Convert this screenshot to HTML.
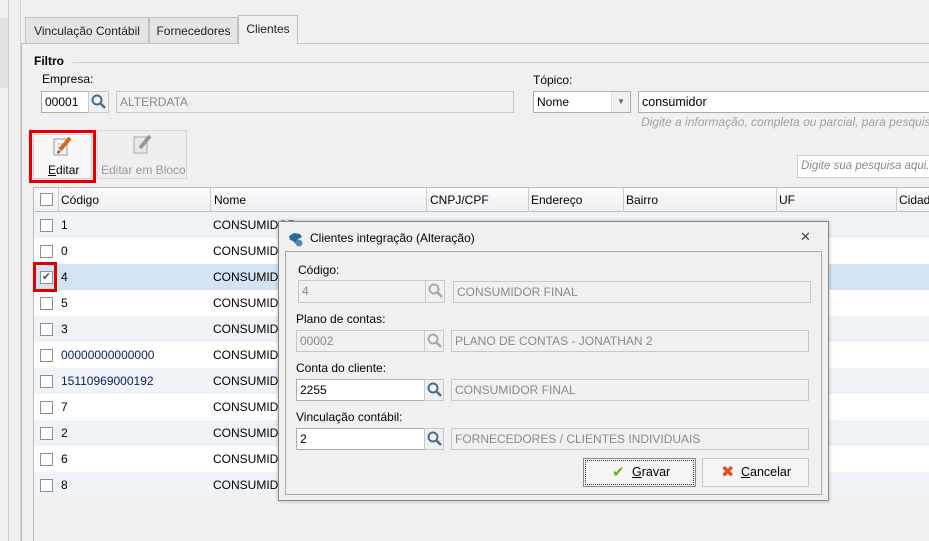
<!DOCTYPE html>
<html><head><meta charset="utf-8"><style>
*{box-sizing:border-box;margin:0;padding:0}
body{width:929px;height:541px;overflow:hidden;background:#f0f0f0;font-family:"Liberation Sans","DejaVu Sans",sans-serif;font-size:12px;color:#000;position:relative}
.a{position:absolute}
.inp{position:absolute;background:#fff;border:1px solid #abadb3;padding:2px 3px;line-height:16px;white-space:nowrap;overflow:hidden}
.dis{background:#f0f0f0;color:#8a8a8a;border-color:#c8c8c8}
.btn{position:absolute;border:1px solid #c8c8c8;background:#e9e9e9;}
.tab{position:absolute;top:17px;height:26px;border:1px solid #c0c0c0;border-bottom:none;background:#e4e4e4;padding:6px 0;text-align:center;font-size:12px;color:#222;white-space:nowrap}
.row{position:absolute;left:34px;width:895px;height:26px;line-height:26px}
.cb{position:absolute;left:6px;top:7px;width:13px;height:13px;border:1px solid #8e8f8f;background:#fff}
.c{position:absolute;white-space:nowrap}
.lbl{position:absolute;font-size:12px}
</style></head><body>
<div class="a" style="left:8px;top:0;width:1px;height:541px;background:#d0d0d0"></div>
<div class="a" style="left:20px;top:0;width:1px;height:541px;background:#d0d0d0"></div>
<div class="a" style="left:0;top:18px;width:8px;height:70px;background:#e0e0e0"></div>
<!-- tabs -->
<div class="tab" style="left:25px;width:124px">Vinculação Contábil</div>
<div class="tab" style="left:149px;width:89px">Fornecedores</div>
<div class="tab" style="left:238px;top:15px;height:29px;width:60px;background:#f0f0f0;z-index:2">Clientes</div>
<div class="a" style="left:21px;top:43px;width:908px;height:498px;border:1px solid #c0c0c0;border-right:none;border-bottom:none"></div>
<div class="a" style="left:34px;top:54px;font-weight:bold;font-size:12px">Filtro</div>
<div class="a" style="left:73px;top:62px;width:856px;height:1px;background:#d0d0d0"></div>
<div class="lbl" style="left:42px;top:72px">Empresa:</div>
<div class="inp" style="left:41px;top:91px;width:48px;height:22px">00001</div>
<div class="btn" style="left:88px;top:91px;width:21px;height:22px;background:#f0f0f0"><svg width="19" height="20"><circle cx="8" cy="8" r="4.5" fill="none" stroke="#4a6b8a" stroke-width="2"/><line x1="11" y1="11" x2="16" y2="16" stroke="#4a6b8a" stroke-width="2.5"/></svg></div>
<div class="inp dis" style="left:116px;top:91px;width:398px;height:22px">ALTERDATA</div>
<div class="lbl" style="left:533px;top:73px">Tópico:</div>
<div class="inp" style="left:533px;top:91px;width:98px;height:22px">Nome</div>
<div class="a" style="left:611px;top:92px;width:19px;height:20px;border-left:1px solid #ddd;background:#f0f0f0;font-size:8px;color:#666;text-align:center;line-height:20px">▼</div>
<div class="inp" style="left:638px;top:91px;width:295px;height:22px;font-size:12.5px">consumidor</div>
<div class="a" style="left:641px;top:115px;font-style:italic;color:#a0a0a0;font-size:12px;white-space:nowrap">Digite a informação, completa ou parcial, para pesquisa</div>
<!-- buttons -->
<div class="a" style="left:29px;top:130px;width:67px;height:53px;border:3px solid #e00000"></div>
<div class="btn" style="left:33px;top:134px;width:59px;height:45px;background:#f7f7f7;border-color:#d0d0d0">
<svg class="a" style="left:18px;top:0px" width="22" height="22"><rect x="2" y="4" width="13" height="16" fill="#f4f4f4" stroke="#999"/><line x1="5" y1="9" x2="11" y2="9" stroke="#bbb"/><line x1="5" y1="12" x2="11" y2="12" stroke="#bbb"/><line x1="8" y1="15" x2="18" y2="3" stroke="#d2691e" stroke-width="4"/><polygon points="5,19 6,15 9,17" fill="#555"/></svg>
<div class="a" style="left:14px;top:28px;font-size:12px"><u>E</u>ditar</div></div>
<div class="btn" style="left:97px;top:130px;width:90px;height:49px;background:#efefef;border-color:#d8d8d8">
<svg class="a" style="left:34px;top:2px" width="22" height="22"><rect x="2" y="4" width="13" height="16" fill="#e8e8e8" stroke="#aaa"/><line x1="8" y1="15" x2="18" y2="3" stroke="#999" stroke-width="4"/></svg>
<div class="a" style="left:3px;top:32px;font-size:12px;color:#999;white-space:nowrap">Editar em Bloco</div></div>
<div class="inp" style="left:797px;top:155px;width:140px;height:23px;font-style:italic;color:#888;font-size:11.5px;border-color:#ccc">Digite sua pesquisa aqui...</div>
<!-- grid -->
<div class="a" style="left:33px;top:187px;width:896px;height:354px;background:#f0f0f0;border-left:1px solid #bbb;border-top:1px solid #bbb"></div>
<div class="a" style="left:34px;top:188px;width:895px;height:24px;background:linear-gradient(#fafbfc,#eef0f3);border-bottom:1px solid #bbb;font-size:12px;line-height:24px">
<div class="cb" style="top:5px"></div>
<div class="c" style="left:24px;width:1px;height:24px;background:#ccc"></div>
<div class="c" style="left:27px">Código</div>
<div class="c" style="left:176px;width:1px;height:24px;background:#ccc"></div><div class="c" style="left:180px">Nome</div>
<div class="c" style="left:392px;width:1px;height:24px;background:#ccc"></div><div class="c" style="left:396px">CNPJ/CPF</div>
<div class="c" style="left:494px;width:1px;height:24px;background:#ccc"></div><div class="c" style="left:497px">Endereço</div>
<div class="c" style="left:589px;width:1px;height:24px;background:#ccc"></div><div class="c" style="left:592px">Bairro</div>
<div class="c" style="left:742px;width:1px;height:24px;background:#ccc"></div><div class="c" style="left:745px">UF</div>
<div class="c" style="left:862px;width:1px;height:24px;background:#ccc"></div><div class="c" style="left:865px">Cidade</div>
</div>
<div class="row" style="top:212px;background:#eff3f8"><div class="cb"></div><div class="c" style="left:27px">1</div><div class="c" style="left:179px">CONSUMIDOR</div></div>
<div class="row" style="top:238px;background:#fff"><div class="cb"></div><div class="c" style="left:27px">0</div><div class="c" style="left:179px">CONSUMIDOR</div></div>
<div class="row" style="top:264px;background:#d3e3f2"><div class="cb" style="font-size:11px;line-height:11px;text-align:center;color:#555">✔</div><div class="c" style="left:27px">4</div><div class="c" style="left:179px">CONSUMIDOR</div></div>
<div class="row" style="top:290px;background:#fff"><div class="cb"></div><div class="c" style="left:27px">5</div><div class="c" style="left:179px">CONSUMIDOR</div></div>
<div class="row" style="top:316px;background:#eff3f8"><div class="cb"></div><div class="c" style="left:27px">3</div><div class="c" style="left:179px">CONSUMIDOR</div></div>
<div class="row" style="top:342px;background:#fff"><div class="cb"></div><div class="c" style="left:27px;color:#102060">00000000000000</div><div class="c" style="left:179px">CONSUMIDOR</div></div>
<div class="row" style="top:368px;background:#eff3f8"><div class="cb"></div><div class="c" style="left:27px;color:#102060">15110969000192</div><div class="c" style="left:179px">CONSUMIDOR</div></div>
<div class="row" style="top:394px;background:#fff"><div class="cb"></div><div class="c" style="left:27px">7</div><div class="c" style="left:179px">CONSUMIDOR</div></div>
<div class="row" style="top:420px;background:#eff3f8"><div class="cb"></div><div class="c" style="left:27px">2</div><div class="c" style="left:179px">CONSUMIDOR</div></div>
<div class="row" style="top:446px;background:#fff"><div class="cb"></div><div class="c" style="left:27px">6</div><div class="c" style="left:179px">CONSUMIDOR</div></div>
<div class="row" style="top:472px;background:#eff3f8"><div class="cb"></div><div class="c" style="left:27px">8</div><div class="c" style="left:179px">CONSUMIDOR</div></div>
<div class="a" style="left:33px;top:262px;width:24px;height:30px;border:3px solid #e00000"></div>
<!-- dialog -->
<div class="a" style="left:278px;top:221px;width:551px;height:280px;background:#f0f0f0;border:1px solid #888;box-shadow:0 0 4px rgba(0,0,0,.25)">
<svg class="a" style="left:9px;top:9px" width="16" height="16"><path d="M1 5 L6 2 L12 3 L14 6 L10 8 L8 13 L5 10 L2 9Z" fill="#2a6a9a"/><circle cx="11" cy="12" r="3.5" fill="#5a8ab0"/></svg>
<div class="a" style="left:31px;top:9px;font-size:12px">Clientes integração (Alteração)</div>
<div class="a" style="left:521px;top:7px;font-size:13px;color:#444">✕</div>
<div class="a" style="left:6px;top:29px;width:537px;height:244px;border:1px solid #aaa"></div>
</div>
<div class="lbl" style="left:298px;top:263px">Código:</div>
<div class="inp dis" style="left:298px;top:280px;width:128px;height:23px">4</div>
<div class="btn" style="left:425px;top:280px;width:20px;height:23px;background:#f0f0f0;border-color:#c8c8c8"><svg width="19" height="21"><circle cx="8" cy="8" r="4.5" fill="none" stroke="#aaa" stroke-width="2"/><line x1="11" y1="11" x2="16" y2="16" stroke="#aaa" stroke-width="2.5"/></svg></div>
<div class="inp dis" style="left:453px;top:281px;width:358px;height:22px">CONSUMIDOR FINAL</div>
<div class="lbl" style="left:296px;top:312px">Plano de contas:</div>
<div class="inp dis" style="left:296px;top:330px;width:129px;height:22px">00002</div>
<div class="btn" style="left:424px;top:330px;width:20px;height:22px;background:#f0f0f0"><svg width="19" height="20"><circle cx="8" cy="8" r="4.5" fill="none" stroke="#aaa" stroke-width="2"/><line x1="11" y1="11" x2="16" y2="16" stroke="#aaa" stroke-width="2.5"/></svg></div>
<div class="inp dis" style="left:451px;top:330px;width:358px;height:22px">PLANO DE CONTAS - JONATHAN 2</div>
<div class="lbl" style="left:296px;top:361px">Conta do cliente:</div>
<div class="inp" style="left:296px;top:379px;width:129px;height:22px">2255</div>
<div class="btn" style="left:424px;top:379px;width:20px;height:22px;background:#f0f0f0"><svg width="19" height="20"><circle cx="8" cy="8" r="4.5" fill="none" stroke="#4a6b8a" stroke-width="2"/><line x1="11" y1="11" x2="16" y2="16" stroke="#4a6b8a" stroke-width="2.5"/></svg></div>
<div class="inp dis" style="left:451px;top:379px;width:358px;height:22px">CONSUMIDOR FINAL</div>
<div class="lbl" style="left:296px;top:410px">Vinculação contábil:</div>
<div class="inp" style="left:296px;top:428px;width:129px;height:22px">2</div>
<div class="btn" style="left:424px;top:428px;width:20px;height:22px;background:#f0f0f0"><svg width="19" height="20"><circle cx="8" cy="8" r="4.5" fill="none" stroke="#4a6b8a" stroke-width="2"/><line x1="11" y1="11" x2="16" y2="16" stroke="#4a6b8a" stroke-width="2.5"/></svg></div>
<div class="inp dis" style="left:451px;top:428px;width:358px;height:22px">FORNECEDORES / CLIENTES INDIVIDUAIS</div>
<div class="btn" style="left:583px;top:458px;width:113px;height:29px;background:#f4f4f4;border-color:#888;outline:1px dotted #333;outline-offset:-3px">
<div class="a" style="left:28px;top:4px;color:#6ab020;font-size:15px">✔</div><div class="a" style="left:48px;top:6px;font-size:12.5px"><u>G</u>ravar</div></div>
<div class="btn" style="left:702px;top:458px;width:107px;height:29px;background:#f4f4f4">
<div class="a" style="left:18px;top:3px;color:#e05020;font-size:16px;font-weight:bold">✖</div><div class="a" style="left:38px;top:6px;font-size:12.5px"><u>C</u>ancelar</div></div>
</body></html>
